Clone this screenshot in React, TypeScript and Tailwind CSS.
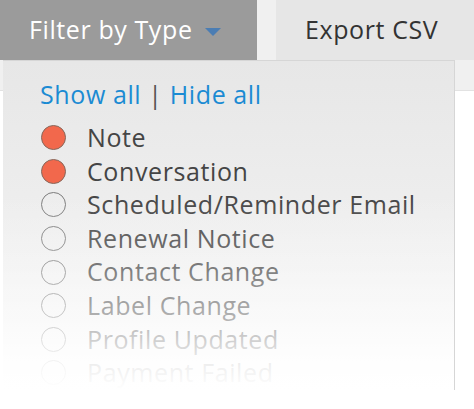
import React from "react";

const items: { label: string; on: boolean }[] = [
  { label: "Note", on: true },
  { label: "Conversation", on: true },
  { label: "Scheduled/Reminder Email", on: false },
  { label: "Renewal Notice", on: false },
  { label: "Contact Change", on: false },
  { label: "Label Change", on: false },
  { label: "Profile Updated", on: false },
  { label: "Payment Failed", on: false },
];

export default function App() {
  return (
    <div
      className="relative w-[474px] h-[409px] overflow-hidden bg-white tracking-[0.6px]"
      style={{ fontFamily: "'Open Sans', 'Noto Sans', sans-serif" }}
    >
      <div className="flex h-[60px] bg-[#f0f0f0]">
        <div className="w-[257px] bg-[#9b9b9b] flex items-center pl-[29px] text-white text-[25px]">
          <span>Filter by Type</span>
          <svg width="16" height="8" viewBox="0 0 16 8" className="ml-[12px] mt-[4px]">
            <polygon points="0,0 16,0 8,8" fill="#4b7db3" />
          </svg>
        </div>
        <div className="ml-[19px] flex-1 bg-[#e6e6e6] flex items-center pl-[29px] text-[#333] text-[25px]">
          Export CSV
        </div>
      </div>
      <div className="flex items-start">
        <div className="w-[3px] h-[31px] bg-[#f0f0f0] border-b border-[#e2e2e2]" />
        <div className="relative w-[452px] h-[330px] border-t border-r border-[#d6d6d6] bg-gradient-to-b from-[#e7e7e7] to-[#f6f6f6] pt-[16px] pl-[37px]">
          <div className="text-[25px] leading-[34px] text-[#1b8bd3]">
            Show all <span className="text-[#555]">|</span> Hide all
          </div>
          <div className="mt-[10px] flex flex-col">
            {items.map((it) => (
              <div key={it.label} className="flex items-center h-[33.6px] text-[25px] text-[#454545]">
                <span
                  className={
                    it.on
                      ? "shrink-0 w-[25px] h-[25px] rounded-full bg-[#f2684c] border-[1.5px] border-[#86685c] ml-[1px]"
                      : "shrink-0 w-[25px] h-[25px] rounded-full border-[1.5px] border-[#7c7c7c] ml-[1px]"
                  }
                />
                <span className="ml-[21px] whitespace-nowrap">{it.label}</span>
              </div>
            ))}
          </div>
          <div className="absolute left-0 right-0 top-[135px] h-[195px] bg-[linear-gradient(to_bottom,rgba(255,255,255,0)_0%,rgba(255,255,255,0.28)_35%,rgba(255,255,255,0.62)_65%,rgba(255,255,255,0.9)_85%,#fff_100%)]" />
        </div>
        <div className="flex-1 h-[31px] bg-[#f0f0f0] border-b border-[#e2e2e2]" />
      </div>
    </div>
  );
}
